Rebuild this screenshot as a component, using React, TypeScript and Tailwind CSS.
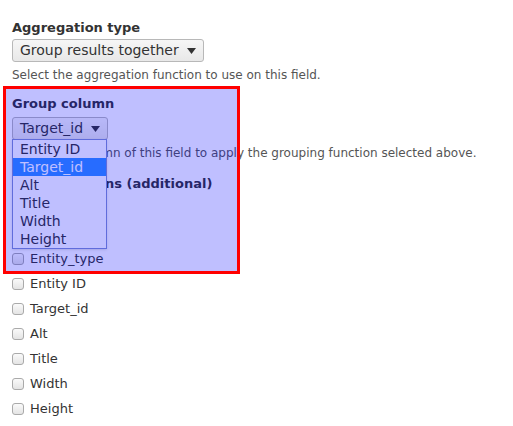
import React from "react"

const columns = ["Bundle", "Delta", "Entity_type", "Entity ID", "Target_id", "Alt", "Title", "Width", "Height"]
const options = ["Entity ID", "Target_id", "Alt", "Title", "Width", "Height"]

function Caret() {
  return (
    <svg width="9" height="6" viewBox="0 0 9 6" className="ml-2">
      <path d="M0 0 L9 0 L4.5 6 Z" fill="#333" />
    </svg>
  )
}

export default function App() {
  return (
    <div className="relative w-[513px] h-[426px] bg-white text-[#333] font-['DejaVu_Sans',sans-serif] overflow-hidden">
      <div className="pl-3 pt-[19px]">
        {/* aggregation type */}
        <div className="text-[13px] font-bold leading-[18px]">Aggregation type</div>
        <div className="mt-[2px] inline-flex items-center h-[23px] px-[7px] border border-[#b8b8b8] rounded-[3px] bg-gradient-to-b from-[#f6f6f6] to-[#e8e8e8] text-[14px]">
          Group results together
          <Caret />
        </div>
        <div className="mt-[5px] text-[12px] leading-[16px] text-[#555]">
          Select the aggregation function to use on this field.
        </div>

        {/* group column */}
        <div className="mt-[12px] text-[13px] font-bold leading-[18px]">Group column</div>
        <div className="relative">
          <div className="mt-[4px] inline-flex items-center h-[23px] px-[7px] border border-[#b8b8b8] rounded-[3px] bg-gradient-to-b from-[#f6f6f6] to-[#e8e8e8] text-[14px]">
            Target_id
            <Caret />
          </div>
          <div className="mt-[5px] text-[12px] leading-[16px] text-[#555]">
            Select the column of this field to apply the grouping function selected above.
          </div>
          <div className="mt-[14px] text-[13px] font-bold leading-[18px]">Group columns (additional)</div>
          <div className="mt-[3px] flex flex-col">
            {columns.map((c) => (
              <label key={c} className="flex items-center gap-[6px] h-[25px] text-[13px]">
                <span className="w-[12px] h-[12px] rounded-[3px] border border-[#aaa] bg-gradient-to-b from-[#fafafa] to-[#e4e4e4]" />
                {c}
              </label>
            ))}
          </div>

          {/* open dropdown */}
          <div className="absolute left-0 top-[26px] w-[95px] border border-[#8090d0] bg-white text-[14px] leading-[18px] shadow-sm">
            {options.map((o) => (
              <div
                key={o}
                className={o === "Target_id" ? "px-[7px] bg-[#3490ff] text-white" : "px-[7px]"}
              >
                {o}
              </div>
            ))}
          </div>
        </div>
      </div>

      {/* highlight overlay */}
      <div className="absolute left-[3px] top-[86px] w-[237px] h-[188px] border-[3px] border-[#ff0000] bg-[rgba(0,0,255,0.25)]" />
    </div>
  )
}
